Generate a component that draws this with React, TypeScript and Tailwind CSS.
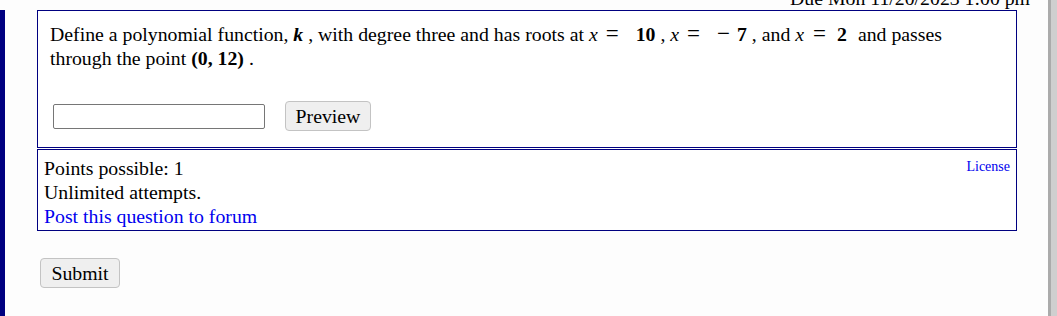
export default function App() {
  const serif = { fontFamily: '"Liberation Serif", "Times New Roman", serif' };

  const mathVar = (v: string) => <span className="italic">{v}</span>;
  const sign = (s: string, cls: string) => (
    <span className={`inline-block text-[23px] leading-[0] ${cls}`}>{s}</span>
  );

  return (
    <div
      className="flex h-[316px] w-[1057px] overflow-hidden bg-[#fdfdfd] text-[19.8px] leading-[24px] text-black"
      style={serif}
    >
      <div className="flex flex-1 flex-col">
        {/* due date line, mostly scrolled out of view */}
        <div className="mt-[-14px] h-[24px] pr-[18px] text-right">Due Mon 11/20/2023 1:00 pm</div>

        <div className="flex flex-1">
          <div className="w-[5px] bg-[#000080]" />
          <div className="flex w-[1012px] flex-col pl-[32px]">
            {/* question box */}
            <div className="border border-[#000080] bg-white px-[12px] pt-[11px] pb-[16px]">
              <p>
                Define a polynomial function, <span className="font-bold italic">k</span> , with degree three and
                has roots at {mathVar("x")}
                {sign("=", "ml-[8px] mr-[17px]")}
                <span className="font-bold">10</span> , {mathVar("x")}
                {sign("=", "ml-[8px] mr-[17px]")}
                {sign("−", "mr-[7px]")}
                <span className="font-bold">7</span> , and {mathVar("x")}
                {sign("=", "ml-[9px] mr-[11px]")}
                <span className="font-bold">2</span>
                <span className="ml-[11px]">and passes</span>
                <br />
                through the point <span className="font-bold">(0, 12)</span> .
              </p>
              <div className="mt-[31px] flex items-center">
                <input
                  type="text"
                  className="ml-[3px] h-[25px] w-[212px] rounded-[2px] border border-[#767676] bg-white"
                />
                <button
                  type="button"
                  className="ml-[20px] h-[30px] w-[86px] rounded-[4px] border border-[#c3c3c3] bg-[#efefef]"
                >
                  Preview
                </button>
              </div>
            </div>

            {/* info box */}
            <div className="mt-[1px] border border-[#000080] bg-white px-[6px] pt-[6px] pb-[2px]">
              <a href="#" className="float-right mt-[1px] text-[14px] leading-[20px] text-[#0000ee]">
                License
              </a>
              <div>Points possible: 1</div>
              <div>Unlimited attempts.</div>
              <a href="#" className="block text-[#0000ee]">
                Post this question to forum
              </a>
            </div>

            <div className="mt-[27px]">
              <button
                type="button"
                className="ml-[3px] h-[30px] w-[80px] rounded-[4px] border border-[#c3c3c3] bg-[#efefef]"
              >
                Submit
              </button>
            </div>
          </div>
        </div>
      </div>

      {/* scrollbar strip */}
      <div className="w-[9px] border-l-[3px] border-[#ababab] bg-[#cfcfcf]" />
    </div>
  );
}
